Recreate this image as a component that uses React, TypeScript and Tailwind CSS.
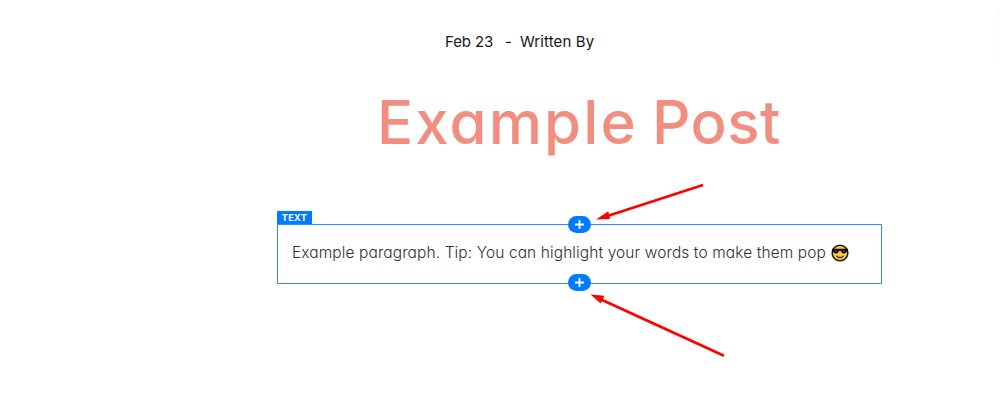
import clsx from "clsx";

const POST = {
  date: "Feb 23",
  byline: "Written By",
  paragraph:
    "Example paragraph. Tip: You can highlight your words to make them pop",
};

function SunglassesEmoji() {
  return (
    <svg
      viewBox="0 0 18 18"
      className="ml-[5px] h-[18px] w-[18px] shrink-0"
      role="img"
      aria-label="😎"
    >
      <circle cx="9" cy="9" r="7.8" fill="#ffc83d" stroke="#1b1b1b" strokeWidth="1.5" />
      <path
        d="M1 4.8h16v1.5l-.9.4c-.3 1.900-1.300 2.700-3.100 2.700-1.700 0-2.600-.8-3-2.400h-2C7.600 8.600 6.700 9.400 5 9.400 3.200 9.400 2.200 8.600 1.900 6.700L1 6.300z"
        fill="#0c0c0c"
      />
      <path d="M3.700 5.800l1.300 1.500M12 5.800l1.300 1.500" stroke="#8b8b8b" strokeWidth=".8" />
      <path
        d="M5.800 12.200c1.700 1.900 4.700 1.900 6.400 0"
        fill="none"
        stroke="#1b1b1b"
        strokeWidth="1.200"
        strokeLinecap="round"
      />
    </svg>
  );
}

function InsertButton({ className }: { className: string }) {
  return (
    <button
      aria-label="Add block"
      className={clsx(
        "absolute left-[290px] flex h-[17px] w-[23px] items-center justify-center rounded-full bg-[#007aff]",
        className,
      )}
    >
      <svg viewBox="0 0 9 9" className="h-[9px] w-[9px]">
        <path d="M4.500 0v9M0 4.500h9" stroke="#fff" strokeWidth="1.800" />
      </svg>
    </button>
  );
}

function Arrows() {
  return (
    <svg
      viewBox="0 0 1000 415"
      className="pointer-events-none absolute top-0 left-0 h-[415px] w-[1000px]"
      fill="#fe0000"
      stroke="#fe0000"
    >
      <path d="M703 185L606 216.500" strokeWidth="2.700" />
      <path d="M596 219.400l12.300-8.100 1.800 7.600z" stroke="none" />
      <path d="M724 355.800L601 299.500" strokeWidth="2.700" />
      <path d="M590.500 294.600l14 1.200-3.800 7.800z" stroke="none" />
    </svg>
  );
}

export default function App() {
  return (
    <main className="relative h-[415px] w-[1000px] overflow-hidden bg-white font-['Inter',sans-serif] [font-feature-settings:'cv11']">
      <div className="absolute top-2 right-0 h-[54px] w-1 rounded-l-full bg-[#fdfdfd]" />
      {/* Post meta */}
      <div className="flex h-6 pt-[30px] pl-[445px] text-[15px] leading-6 whitespace-pre text-[#161616]">
        <span className="w-[60px] tracking-[-0.1px]">{POST.date}</span>
        <span className="w-[15px]">-</span>
        <span className="tracking-[0.1px]">{POST.byline}</span>
      </div>
      <h1 className="mt-[47px] ml-[377px] h-[90px] text-[60px] leading-[90px] font-medium tracking-[2.1px] [word-spacing:-4px] whitespace-nowrap text-[#f28e80]">
        Example <span className="tracking-[0.5px]">Post</span>
      </h1>
      {/* Selected text block */}
      <section className="mt-[44px] ml-[277px] w-[605px]">
        <div className="flex h-[14px] w-[35px] items-center justify-center bg-[#007aff] text-[9px] font-bold tracking-[0.4px] text-white">
          TEXT
        </div>
        <div className="relative -mt-px h-[60px] border border-[#2f8dfa]">
          <InsertButton className="top-[-9px]" />
          <div className="flex h-[56px] items-center pl-[14px] text-[15.500px] font-light tracking-[0.1px] whitespace-nowrap text-[#303030]">
            <p>{POST.paragraph}</p>
            <SunglassesEmoji />
          </div>
          <InsertButton className="bottom-[-8px]" />
        </div>
      </section>
      <Arrows />
    </main>
  );
}
